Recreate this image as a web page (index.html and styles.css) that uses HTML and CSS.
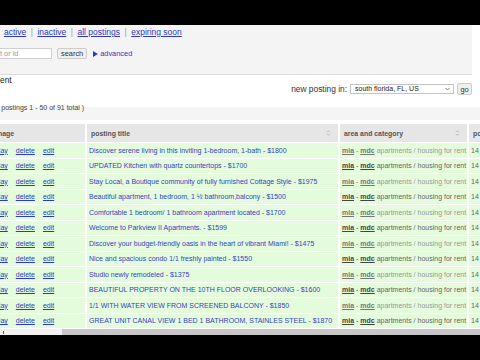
FILE: index.html
```html
<!DOCTYPE html>
<html>
<head>
    <meta charset="utf-8" />
    <title>postings</title>
    <link rel="stylesheet" href="styles.css">
</head>
<body>
    <div class="screen">
        <div class="bar"></div>
        <div class="page">
            <div class="panel">
                <div class="nav">
                    <a href="#">active</a><span class="sep">|</span><a href="#">inactive</a><span class="sep">|</span><a href="#">all postings</a><span class="sep">|</span><a href="#">expiring soon</a>
                </div>
                <form class="search" action="#">
                    <input class="ip1" type="text" placeholder="search by text or id" />
                    <input class="btn" type="submit" value="search" />
                    <span class="adv"><svg width="5" height="6" viewBox="0 0 5 6"><path d="M0 0 L5 3 L0 6 Z" fill="#2b3bc4" /></svg> advanced</span>
                </form>
            </div>
            <div class="mid">
                <div class="lab1">ent</div>
                <form class="newpost" action="#">
                    <label for="area">new posting in:</label>
                    <span class="sel">
                        <select id="area"><option>south florida, FL, US</option></select>
                        <svg class="chev" width="5" height="4" viewBox="0 0 5 4"><path d="M0.5 1 L2.5 3 L4.5 1" fill="none" stroke="#666" stroke-width="0.8" /></svg>
                    </span>
                    <input class="btn go" type="submit" value="go" />
                </form>
            </div>
            <div class="band">( postings 1 - 50 of 91 total )</div>
            <table class="list">
                <colgroup>
                    <col class="c1"><col class="c2"><col class="c3"><col class="c4">
                </colgroup>
                <thead>
                    <tr>
                        <th>manage</th>
                        <th><div class="th-in">posting title <svg width="5" height="8" viewBox="0 0 5 8"><path d="M1 3.2 L2.5 1.7 L4 3.2 M1 4.8 L2.5 6.3 L4 4.8" fill="none" stroke="#aaa" stroke-width="0.7" /></svg></div></th>
                        <th><div class="th-in">area and category <svg width="5" height="8" viewBox="0 0 5 8"><path d="M1 3.2 L2.5 1.7 L4 3.2 M1 4.8 L2.5 6.3 L4 4.8" fill="none" stroke="#aaa" stroke-width="0.7" /></svg></div></th>
                        <th>posted date</th>
                    </tr>
                </thead>
                <tbody>
                    <tr><td class="act"><a href="#">display</a><a href="#">delete</a><a href="#">edit</a></td><td class="title">Discover serene living in this inviting 1-bedroom, 1-bath - $1800</td><td class="area"><u>mia</u> - <u>mdc</u> <span class="cat">apartments / housing for rent</span></td><td class="date">14 Feb</td></tr>
                    <tr><td class="act"><a href="#">display</a><a href="#">delete</a><a href="#">edit</a></td><td class="title">UPDATED Kitchen with quartz countertops - $1700</td><td class="area"><u>mia</u> - <u>mdc</u> <span class="cat">apartments / housing for rent</span></td><td class="date">14 Feb</td></tr>
                    <tr><td class="act"><a href="#">display</a><a href="#">delete</a><a href="#">edit</a></td><td class="title">Stay Local, a Boutique community of fully furnished Cottage Style - $1975</td><td class="area"><u>mia</u> - <u>mdc</u> <span class="cat">apartments / housing for rent</span></td><td class="date">14 Feb</td></tr>
                    <tr><td class="act"><a href="#">display</a><a href="#">delete</a><a href="#">edit</a></td><td class="title">Beautiful apartment, 1 bedroom, 1 ½ bathroom,balcony - $1500</td><td class="area"><u>mia</u> - <u>mdc</u> <span class="cat">apartments / housing for rent</span></td><td class="date">14 Feb</td></tr>
                    <tr><td class="act"><a href="#">display</a><a href="#">delete</a><a href="#">edit</a></td><td class="title">Comfortable 1 bedroom/ 1 bathroom apartment located - $1700</td><td class="area"><u>mia</u> - <u>mdc</u> <span class="cat">apartments / housing for rent</span></td><td class="date">14 Feb</td></tr>
                    <tr><td class="act"><a href="#">display</a><a href="#">delete</a><a href="#">edit</a></td><td class="title">Welcome to Parkview II Apartments. - $1599</td><td class="area"><u>mia</u> - <u>mdc</u> <span class="cat">apartments / housing for rent</span></td><td class="date">14 Feb</td></tr>
                    <tr><td class="act"><a href="#">display</a><a href="#">delete</a><a href="#">edit</a></td><td class="title">Discover your budget-friendly oasis in the heart of vibrant Miami! - $1475</td><td class="area"><u>mia</u> - <u>mdc</u> <span class="cat">apartments / housing for rent</span></td><td class="date">14 Feb</td></tr>
                    <tr><td class="act"><a href="#">display</a><a href="#">delete</a><a href="#">edit</a></td><td class="title">Nice and spacious condo 1/1 freshly painted - $1550</td><td class="area"><u>mia</u> - <u>mdc</u> <span class="cat">apartments / housing for rent</span></td><td class="date">14 Feb</td></tr>
                    <tr><td class="act"><a href="#">display</a><a href="#">delete</a><a href="#">edit</a></td><td class="title">Studio newly remodeled - $1375</td><td class="area"><u>mia</u> - <u>mdc</u> <span class="cat">apartments / housing for rent</span></td><td class="date">14 Feb</td></tr>
                    <tr><td class="act"><a href="#">display</a><a href="#">delete</a><a href="#">edit</a></td><td class="title">BEAUTIFUL PROPERTY ON THE 10TH FLOOR OVERLOOKING - $1600</td><td class="area"><u>mia</u> - <u>mdc</u> <span class="cat">apartments / housing for rent</span></td><td class="date">14 Feb</td></tr>
                    <tr><td class="act"><a href="#">display</a><a href="#">delete</a><a href="#">edit</a></td><td class="title">1/1 WITH WATER VIEW FROM SCREENED BALCONY - $1850</td><td class="area"><u>mia</u> - <u>mdc</u> <span class="cat">apartments / housing for rent</span></td><td class="date">14 Feb</td></tr>
                    <tr><td class="act"><a href="#">display</a><a href="#">delete</a><a href="#">edit</a></td><td class="title">GREAT UNIT CANAL VIEW 1 BED 1 BATHROOM, STAINLES STEEL - $1870</td><td class="area"><u>mia</u> - <u>mdc</u> <span class="cat">apartments / housing for rent</span></td><td class="date">14 Feb</td></tr>
                </tbody>
            </table>
        </div>
        <div class="scroll"><span class="tick"></span><span class="thumb"></span></div>
        <div class="bar bottom"></div>
    </div>
</body>
</html>
```

FILE: styles.css
```css
* {
    box-sizing: border-box;
    font-family: "Liberation Sans", Arial, sans-serif;
}

body {
    margin: 0;
    background: #000;
    overflow: hidden;
}

.screen {
    width: 480px;
    height: 360px;
    display: flex;
    flex-direction: column;
}

.bar {
    height: 25px;
    flex: none;
    background: #000;
}

.bar.bottom {
    flex: 1;
}

.page {
    height: 304px;
    flex: none;
    background: #fff;
    overflow: hidden;
}

.panel {
    width: 472px;
    height: 50px;
    background: #f4f4f4;
    border-bottom: 1px solid #dcdcdc;
    padding: 2px 0 0 4px;
}

.nav {
    font-size: 8.5px;
    line-height: 10px;
    height: 10px;
    white-space: nowrap;
}

.nav a {
    color: #2b3bc4;
}

.sep {
    color: #999;
    margin: 0 4.5px;
}

.search {
    display: flex;
    align-items: center;
    margin: 11px 0 0 0;
    height: 11px;
}

.ip1 {
    width: 100px;
    height: 11px;
    margin: 0 0 0 -52px;
    padding: 0 3px;
    border: 1px solid #cfcfcf;
    background: #fff;
    font-size: 7.4px;
    outline: none;
}

.ip1::placeholder {
    color: #999;
}

.btn {
    height: 11px;
    margin: 0 0 0 5px;
    padding: 0 3px;
    font-size: 7.4px;
    line-height: 9px;
    color: #333;
    background: #efefef;
    border: 1px solid #cdcdcd;
    border-radius: 2px;
}

.adv {
    margin-left: 6px;
    font-size: 7.4px;
    color: #2b3bc4;
    display: flex;
    align-items: center;
    gap: 2px;
}

.mid {
    width: 472px;
    height: 28px;
    display: flex;
    justify-content: space-between;
    align-items: flex-start;
}

.lab1 {
    font-size: 8.4px;
    line-height: 10px;
    color: #222;
}

.newpost {
    display: flex;
    align-items: center;
    margin: 8px 0 0 0;
    height: 12px;
    font-size: 8.4px;
    color: #333;
}

.sel {
    position: relative;
    margin-left: 3px;
}

.sel select {
    -webkit-appearance: none;
    appearance: none;
    display: block;
    width: 104px;
    height: 10px;
    padding: 0 0 0 4px;
    font-size: 7px;
    line-height: 8px;
    color: #222;
    background: #fff;
    border: 1px solid #c4c4c4;
    border-radius: 0;
}

.chev {
    position: absolute;
    right: 4px;
    top: 3px;
}

.go {
    width: 15px;
    height: 12px;
    margin-left: 3px;
    padding: 0;
}

.band {
    height: 17px;
    margin-left: -3px;
    font-size: 7px;
    line-height: 10px;
    color: #444;
    background: linear-gradient(#fff 4px, #f5f5f5 4px);
}

.list {
    margin: 3px 0 0 -18px;
    width: 529px;
    table-layout: fixed;
    border-collapse: separate;
    border-spacing: 2px 1px;
}

.c1 { width: 101px; }
.c2 { width: 251px; }
.c3 { width: 127px; }
.c4 { width: 40px; }

.list th {
    height: 18px;
    padding: 0 7px 0 4px;
    background: #e6e6e6;
    color: #555;
    font-size: 6.9px;
    font-weight: bold;
    text-align: left;
    white-space: nowrap;
    overflow: hidden;
}

.th-in {
    display: flex;
    justify-content: space-between;
    align-items: center;
}

.list td {
    height: 14.5px;
    padding: 0 2px;
    background: #e4fcdc;
    font-size: 7px;
    white-space: nowrap;
    overflow: hidden;
}

.act {
    padding-left: 2.5px;
}

.act a {
    color: #2b3bc4;
    margin-right: 8px;
}

.title {
    color: #3444c4;
}

.area {
    color: #777;
}

.area u {
    font-weight: bold;
}

.cat {
    color: #999;
}

.list tbody tr:nth-child(even) .area {
    color: #444;
}

.list tbody tr:nth-child(even) .cat {
    color: #666;
}

.date {
    color: #666;
}

.scroll {
    height: 6px;
    flex: none;
    display: flex;
    align-items: center;
    background: #f1f1f1;
}

.tick {
    width: 1px;
    height: 3px;
    margin-left: 3px;
    background: #555;
}

.thumb {
    height: 6px;
    margin-left: 58px;
    flex: 1;
    background: #c6c6c6;
}
```
